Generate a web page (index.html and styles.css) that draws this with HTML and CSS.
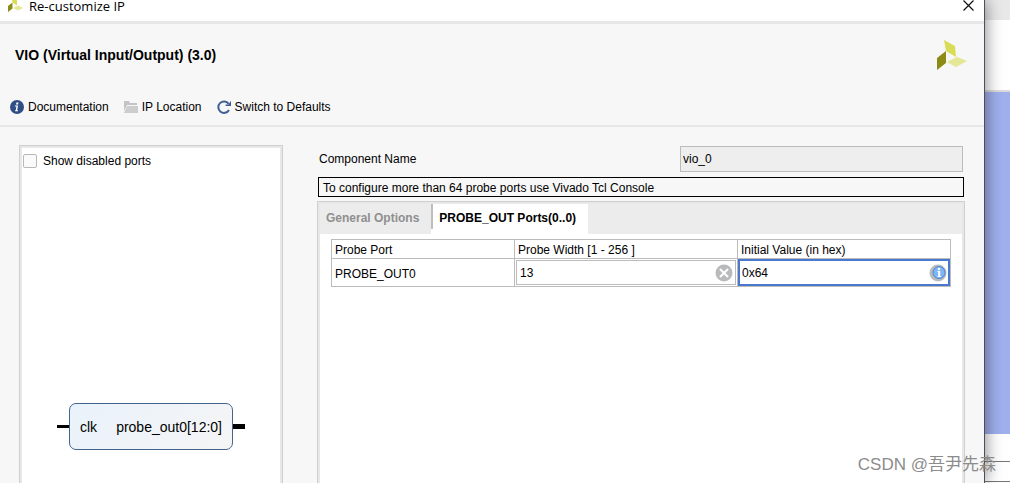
FILE: index.html
```html
<!DOCTYPE html>
<html lang="en">
<head>
    <meta charset="UTF-8">
    <meta name="viewport" content="width=device-width, initial-scale=1.0">
    <title>Re-customize IP</title>
    <link rel="stylesheet" href="styles.css">
</head>
<body>
    <div class="dialog">
        <header class="titlebar">
            <svg class="titlebar-logo" viewBox="0 0 30 30">
                <path fill="#d9dc55" d="M7 0l11 7v10L9 11z"/>
                <path fill="#8c8c14" d="M0 18l9-7v12l-9 7z"/>
                <path fill="#e4e794" d="M10 22l11-5 9 5-10 5z"/>
            </svg>
            <span class="titlebar-text">Re-customize IP</span>
            <button class="close-button" aria-label="Close">
                <svg width="11" height="11" viewBox="0 0 11 11"><path d="M.5.5l10 10M10.5.5l-10 10" stroke="#111" stroke-width="1.2"/></svg>
            </button>
        </header>

        <div class="ip-header">
            <div class="ip-title-row">
                <h1 class="ip-title">VIO (Virtual Input/Output) (3.0)</h1>
                <svg class="ip-logo" viewBox="0 0 30 30">
                    <path fill="#d9dc55" d="M7 0l11 6 1 11L9 11z"/>
                    <path fill="#8c8c14" d="M0 18l9-7v12l-9 7z"/>
                    <path fill="#e4e794" d="M10 22l10-5 10 4-11 6z"/>
                </svg>
            </div>
            <div class="toolbar">
                <button class="tool-button">
                    <svg width="14" height="14" viewBox="0 0 14 14">
                        <circle cx="7" cy="7" r="7" fill="#2f4e85"/>
                        <path fill="#fff" d="M6.4 2.5h2.1l-.4 1.9H6zM5 5.6h3.1l-1 4.6h1l-.2 1H5l.2-1h.5l.7-3.6H4.8z"/>
                    </svg>
                    Documentation
                </button>
                <button class="tool-button">
                    <svg width="14" height="14" viewBox="0 0 14 14">
                        <path fill="#c4c4c4" d="M0 1h5l1 2h7v2H3L0 11z"/>
                        <path fill="#cdcdcd" d="M3 6h11v7H0z"/>
                    </svg>
                    IP Location
                </button>
                <button class="tool-button">
                    <svg width="14" height="14" viewBox="0 0 14 14">
                        <path fill="none" stroke="#3f5f95" stroke-width="2" d="M11.6 3.8A5.7 5.7 0 1 0 12 10"/>
                        <path fill="#3f5f95" d="M14 .8V6H8.6V4.6h2.8z"/>
                    </svg>
                    Switch to Defaults
                </button>
            </div>
        </div>

        <main class="content">
            <section class="ports-panel">
                <label class="show-ports">
                    <input type="checkbox" class="checkbox">
                    Show disabled ports
                </label>
                <div class="symbol">
                    <span class="pin"></span>
                    <div class="block">
                        <span>clk</span>
                        <span>probe_out0[12:0]</span>
                    </div>
                    <span class="pin pin-bus"></span>
                </div>
            </section>

            <section class="config">
                <div class="name-row">
                    <label for="component-name">Component Name</label>
                    <input type="text" id="component-name" class="name-input" value="vio_0" readonly>
                </div>
                <p class="notice">To configure more than 64 probe ports use Vivado Tcl Console</p>
                <div class="tab-panel">
                    <div class="tabs" role="tablist">
                        <button class="tab" role="tab">General Options</button>
                        <button class="tab active" role="tab" aria-selected="true">PROBE_OUT Ports(0..0)</button>
                    </div>
                    <table class="probe-table">
                        <thead>
                            <tr>
                                <th class="col-port">Probe Port</th>
                                <th class="col-width">Probe Width [1 - 256 ]</th>
                                <th>Initial Value (in hex)</th>
                            </tr>
                        </thead>
                        <tbody>
                            <tr>
                                <td class="port-name">PROBE_OUT0</td>
                                <td>
                                    <div class="field">
                                        <input type="text" value="13" aria-label="Probe Width">
                                        <svg width="18" height="18" viewBox="0 0 18 18">
                                            <circle cx="9" cy="9" r="8.5" fill="#b9babb"/>
                                            <path d="M5 5l8 8M13 5l-8 8" stroke="#fff" stroke-width="2"/>
                                        </svg>
                                    </div>
                                </td>
                                <td>
                                    <div class="field focused">
                                        <input type="text" value="0x64" aria-label="Initial Value">
                                        <svg width="18" height="18" viewBox="0 0 18 18">
                                            <circle cx="9" cy="9" r="8.5" fill="#b9babb"/>
                                            <circle cx="10" cy="8.5" r="6" fill="#7db5f5" stroke="#4a87d4"/>
                                            <circle cx="10" cy="5" r="1.3" fill="#fff"/>
                                            <path fill="#fff" d="M8.4 7h2.8v5h.8v1H8.4v-1h.8V8h-.8z"/>
                                        </svg>
                                    </div>
                                </td>
                            </tr>
                        </tbody>
                    </table>
                </div>
            </section>
        </main>
    </div>

    <aside class="backdrop">
        <div class="backdrop-bar"></div>
        <div class="backdrop-blank"></div>
        <div class="backdrop-canvas"></div>
        <div class="backdrop-list"></div>
        <div class="backdrop-row"></div>
    </aside>
    <div class="watermark">CSDN @吾尹先森</div>
</body>
</html>
```
FILE: styles.css
```css
* {
    box-sizing: border-box;
}
body {
    margin: 0;
    height: 100vh;
    display: flex;
    overflow: hidden;
    position: relative;
    font-family: "Liberation Sans", Arial, sans-serif;
    font-size: 12px;
    line-height: 16px;
    color: #000;
}
button, input {
    font: inherit;
    color: inherit;
}
button {
    border: none;
    background: none;
    padding: 0;
}
svg {
    display: block;
    flex: none;
}
.dialog {
    flex: 1;
    min-width: 0;
    display: flex;
    flex-direction: column;
    background: #f7f7f7;
    border-right: 1px solid #4c4f59;
    box-shadow: 0 0 16px rgba(0,0,0,0.5);
    z-index: 1;
}

/* Title bar */
.titlebar {
    display: flex;
    align-items: flex-start;
    height: 24px;
    padding: 0 10px 0 8px;
    background: #fff;
    border-bottom: 3px solid #e7e7e7;
}
.titlebar-logo {
    width: 15px;
    height: 15px;
    margin-top: -3px;
}
.titlebar-text {
    flex: 1;
    margin-left: 6px;
    font-family: "Open Sans", "Noto Sans", sans-serif;
    font-size: 13px;
    line-height: 12px;
}

/* IP header */
.ip-header {
    padding: 16px 17px 10px 10px;
    border-bottom: 2px solid #e7e7e7;
}
.ip-title-row {
    display: flex;
    justify-content: space-between;
    align-items: flex-start;
    padding-left: 5px;
}
.ip-title {
    margin: 6px 0 0;
    font-size: 14px;
    line-height: 18px;
}
.ip-logo {
    width: 30px;
    height: 30px;
}
.toolbar {
    display: flex;
    gap: 15px;
    margin-top: 29px;
}
.tool-button {
    display: flex;
    align-items: center;
    gap: 4px;
}

/* Content */
.content {
    flex: 1;
    display: flex;
    gap: 34px;
    padding: 18px 19px 0;
}
.ports-panel,
.tab-panel {
    background: #fff;
    border: 1px solid #cfcfcf;
    border-bottom: none;
    box-shadow: inset 2px 2px #e8e8e8, inset -2px 0 #e8e8e8;
}
.ports-panel {
    width: 264px;
    flex: none;
    padding: 7px 3px;
}
.show-ports {
    display: flex;
    align-items: center;
    gap: 6px;
}
.checkbox {
    appearance: none;
    width: 14px;
    height: 14px;
    margin: 0;
    border: 1px solid #b8b8b8;
    border-radius: 2px;
    background: #fafafa;
}
.symbol {
    display: flex;
    align-items: center;
    justify-content: center;
    margin-top: 234px;
}
.pin {
    width: 12px;
    height: 3px;
    background: #000;
}
.pin-bus {
    height: 5px;
}
.block {
    display: flex;
    align-items: center;
    gap: 19px;
    height: 47px;
    padding: 0 10px;
    border: 1px solid #45648c;
    border-radius: 7px;
    background: linear-gradient(135deg, #e9f2fb, #f5f5f5);
    font-size: 14px;
}

/* Configuration side */
.config {
    flex: 1;
    min-width: 0;
    display: flex;
    flex-direction: column;
}
.name-row {
    display: flex;
    justify-content: space-between;
    align-items: center;
    padding: 1px 2px 0;
}
.name-input {
    width: 283px;
    height: 26px;
    padding: 0 2px;
    border: 1px solid #bcbcbc;
    background: #eee;
}
.notice {
    margin: 5px 1px 4px;
    padding: 2px 4px 0;
    height: 20px;
    border: 1px solid #000;
}
.tab-panel {
    flex: 1;
    padding: 2px 2px 0;
}
.tabs {
    display: flex;
    height: 30px;
    background: #ececec;
}
.tab {
    padding: 0 12px 2px 6px;
    font-weight: bold;
    color: #8f8f8f;
}
.tab.active {
    padding: 0 12px 2px 8px;
    color: #000;
    background: linear-gradient(#bdbdbd, #bdbdbd) 0 0 / 2px 25px no-repeat, #fff;
}
.probe-table {
    width: calc(100% - 22px);
    margin: 5px 11px 0;
    border-collapse: collapse;
    table-layout: fixed;
}
.probe-table th,
.probe-table td {
    border: 1px solid #bcbcbc;
    padding: 0;
    text-align: left;
    font-weight: normal;
}
.probe-table th {
    height: 19px;
    padding: 2px 3px 0;
}
.col-port {
    width: 183px;
}
.col-width {
    width: 223px;
}
.probe-table .port-name {
    padding: 2px 3px 0;
}
.field {
    display: flex;
    align-items: center;
    height: 25px;
    margin: 1px;
    padding: 0 2px 0 3px;
    border: 1px solid #bcbcbc;
}
.field.focused {
    height: 27px;
    margin: 0;
    padding: 0 1px 0 2px;
    border: 2px solid #4a78cc;
}
.field input {
    flex: 1;
    min-width: 0;
    border: none;
    outline: none;
    padding: 0;
    background: none;
}

/* Window behind the dialog */
.backdrop {
    width: 25px;
    display: flex;
    flex-direction: column;
    background: #fff;
}
.backdrop-bar {
    height: 20px;
    background: #e9e9e9;
}
.backdrop-blank {
    height: 72px;
    border-bottom: 2px solid #dcdcdc;
}
.backdrop-canvas {
    flex: 1;
    background: #a0b0ef;
}
.backdrop-list {
    height: 28px;
    border-bottom: 1px solid #777;
}
.backdrop-row {
    height: 20px;
    margin-bottom: 1px;
    border-bottom: 1px solid #777;
}
.watermark {
    position: absolute;
    right: 14px;
    bottom: 6px;
    z-index: 2;
    font-family: "Liberation Sans", "Noto Sans CJK SC", sans-serif;
    font-size: 17px;
    line-height: 24px;
    color: #8c8c8c;
}
```
